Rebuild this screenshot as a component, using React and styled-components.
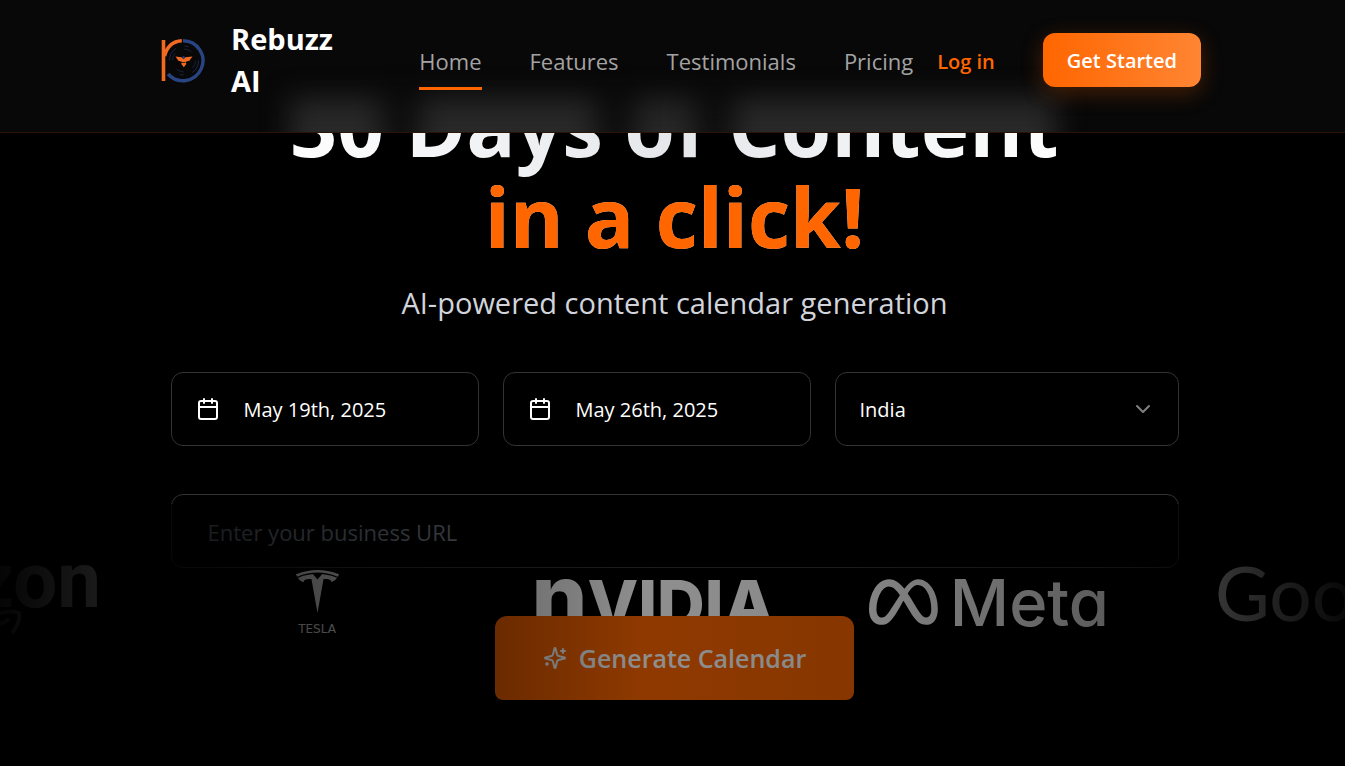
import { useState } from 'react'
import styled, { createGlobalStyle } from 'styled-components'
import { SiMeta, SiTesla } from 'react-icons/si'

const colors = {
  primary: '#ff6600',
  primaryLight: '#ff8533',
  border: '#333333',
  muted: '#a3a3a3',
}

const GlobalStyle = createGlobalStyle`
  * {
    box-sizing: border-box;
  }

  body {
    margin: 0;
    background-color: #000;
    color: #fff;
    font-family: 'Open Sans', 'Noto Sans', sans-serif;
    overflow-x: hidden;
  }

  button, input, select {
    font-family: inherit;
  }
`

const HeaderBar = styled.header`
  position: fixed;
  top: 0;
  left: 0;
  right: 0;
  z-index: 10;
  overflow: hidden;
  background-color: #080808;
  border-bottom: 1px solid rgba(255, 102, 0, 0.15);

  /* soft light of the title behind the bar */
  &::before {
    content: '';
    position: absolute;
    z-index: -1;
    top: 98px;
    left: 50%;
    width: 766px;
    height: 80px;
    transform: translateX(-50%);
    background: linear-gradient(
      90deg,
      #282828 0 12%,
      #0c0c0c 12% 17%,
      #282828 17% 40%,
      #0c0c0c 40% 45%,
      #262626 45% 53%,
      #0c0c0c 53% 58%,
      #282828 58%
    );
    filter: blur(14px);
  }
`

const HeaderInner = styled.div`
  max-width: 1057px;
  margin: 0 auto;
  padding: 18px 0 30px 16px;
  display: flex;
  align-items: center;
`

const Brand = styled.a`
  flex: 1;
  display: flex;
  align-items: center;
  gap: 24px;
  color: white;
  text-decoration: none;
`

const BrandName = styled.span`
  width: 112px;
  font-size: 29px;
  font-weight: 700;
  line-height: 42px;
`

const Nav = styled.nav`
  display: flex;
  gap: 48px;
`

const NavLink = styled.a`
  padding: 12px 0 8px;
  color: ${colors.muted};
  text-decoration: none;
  font-size: 22px;
  line-height: 36px;
  border-bottom: 3px solid ${(props) => (props.$isActive ? colors.primary : 'transparent')};
`

const LoginLink = styled.a`
  padding: 2px 24px 0;
  color: ${colors.primary};
  text-decoration: none;
  font-size: 20px;
  font-weight: 600;
  white-space: nowrap;
`

const StartButton = styled.button`
  height: 54px;
  margin-left: 24px;
  padding: 0 24px;
  border: none;
  border-radius: 12px;
  background: linear-gradient(90deg, ${colors.primary}, ${colors.primaryLight});
  box-shadow: 0 6px 22px rgba(255, 102, 0, 0.25);
  color: white;
  font-size: 20px;
  font-weight: 600;
  white-space: nowrap;
`

const Hero = styled.main`
  padding-top: 80px;
  min-height: 100vh;
`

const Container = styled.div`
  max-width: 1012px;
  margin: 0 auto;
  padding-left: 4px;
`

const Title = styled.h1`
  margin: 0;
  color: transparent;
  background: linear-gradient(90deg, #ffffff 10%, #e5e7eb, #ffffff 90%);
  background-clip: text;
  font-size: 82px;
  font-weight: 700;
  line-height: 91px;
  text-align: center;
`

const TitleAccent = styled.span`
  display: block;
  color: ${colors.primary};
`

const Subtitle = styled.p`
  margin: 20px 0 48px;
  color: #d1d5db;
  font-size: 29px;
  line-height: 42px;
  text-align: center;
`

const Fields = styled.div`
  display: grid;
  grid-template-columns: 308fr 308fr 344fr;
  gap: 24px;
`

const DateButton = styled.button`
  height: 74px;
  padding: 0 24px;
  display: flex;
  align-items: center;
  gap: 24px;
  border: 1px solid ${colors.border};
  border-radius: 12px;
  background-color: transparent;
  color: white;
  font-size: 20px;
`

const SelectBox = styled.div`
  display: grid;
  align-items: center;

  > * {
    grid-area: 1 / 1;
  }

  svg {
    justify-self: end;
    margin-right: 24px;
    pointer-events: none;
  }
`

const CountrySelect = styled.select`
  appearance: none;
  width: 100%;
  height: 74px;
  padding: 0 24px;
  border: 1px solid ${colors.border};
  border-radius: 12px;
  background-color: transparent;
  color: white;
  font-size: 20px;
`

const Stage = styled.section`
  position: relative;
  margin-top: 48px;
  overflow: hidden;
`

const StageForm = styled.form`
  position: relative;
  display: flex;
  flex-direction: column;
  align-items: center;
  gap: 48px;
`

const UrlInput = styled.input`
  width: 100%;
  height: 74px;
  padding: 2px 36px 0;
  border: 1px solid ${colors.border};
  border-radius: 12px;
  background-color: transparent;
  color: white;
  font-size: 22px;

  &::placeholder {
    color: #868e9c;
  }
`

const GenerateButton = styled.button`
  height: 84px;
  padding: 0 48px;
  display: flex;
  align-items: center;
  gap: 12px;
  border: none;
  border-radius: 12px 12px 8px 8px;
  background-color: ${colors.primary};
  color: white;
  font-size: 25px;
  font-weight: 600;
`

// darkens the lower part of the hero, strongest at both edges
const Shade = styled.div`
  position: absolute;
  inset: 10px 0 0;
  pointer-events: none;
  background: linear-gradient(
    90deg,
    rgba(0, 0, 0, 0.98) 0%,
    rgba(0, 0, 0, 0.72) 23%,
    rgba(0, 0, 0, 0.58) 37%,
    rgba(0, 0, 0, 0.44) 48%,
    rgba(0, 0, 0, 0.47) 63%,
    rgba(0, 0, 0, 0.64) 82%,
    rgba(0, 0, 0, 0.8) 91%,
    rgba(0, 0, 0, 0.97) 100%
  );
`

const Marquee = styled.div`
  position: absolute;
  top: 58px;
  left: -139px;
  display: flex;
  gap: 96px;
`

const LogoSlot = styled.div`
  width: 240px;
  height: 96px;
  padding: ${(props) => props.$padding || '0'};
  flex-shrink: 0;
  display: flex;
  flex-direction: ${(props) => (props.$isStacked ? 'column' : 'row')};
  align-items: center;
  justify-content: ${(props) => props.$align || 'center'};
  gap: ${(props) => props.$gap || 0}px;
`

const AmazonMark = styled.div`
  position: relative;
  align-self: flex-start;
  font-family: Roboto, sans-serif;
  font-size: 78px;
  font-weight: 700;
  line-height: 58px;

  svg {
    position: absolute;
    right: 78px;
    top: 56px;
  }
`

const TeslaName = styled.span`
  font-family: 'DejaVu Sans', sans-serif;
  font-size: 12px;
  line-height: 12px;
`

const NvidiaMark = styled.span`
  font-family: Inter, sans-serif;
  font-size: 66px;
  font-weight: 800;
  line-height: 96px;
`

const NvidiaInitial = styled.span`
  font-size: 88px;
`

const MetaName = styled.span`
  font-family: Inter, sans-serif;
  font-size: 65px;
  font-weight: 500;
  font-feature-settings: 'cv11';
`

const GoogleMark = styled.span`
  font-family: Lato, sans-serif;
  font-size: 75px;
  line-height: 80px;
`

function RebuzzLogo() {
  return (
    <svg width="47" height="48" viewBox="0 0 47 48" fill="none" aria-hidden="true">
      <path d="M3.500 4v41" stroke="#f26a21" strokeWidth="3.600" />
      <path d="M4.500 20C7 10.500 13 5.200 21.800 4.700" stroke="#f26a21" strokeWidth="3.600" />
      <path d="M23 4.700A20 20 0 1 1 8 38" stroke="#284482" strokeWidth="3.400" />
      <circle cx="24" cy="24.500" r="14.500" stroke="#1b2a4c" strokeDasharray="14 9 4 18.500" />
      <circle cx="24" cy="24.500" r="11.500" stroke="#16213a" strokeDasharray="8 10" />
      <path
        d="M15.500 20.500l6 .8 2 1.700 2-1.700 7-.8-3.200 4.300-3.500.9.500 2.300-2.500 3.200-2.500-3.200.5-2.300-3.500-.9z"
        fill="#f26a21"
      />
      <circle cx="23.500" cy="21.500" r="1.300" fill="#284482" />
      <path d="M21.500 26.500h4" stroke="#101010" strokeWidth=".8" />
    </svg>
  )
}

function CalendarIcon() {
  return (
    <svg width="24" height="24" viewBox="0 0 24 24" fill="none" stroke="currentColor" strokeWidth="2" strokeLinecap="round" strokeLinejoin="round">
      <path d="M8 2v4M16 2v4M3 10h18" />
      <rect width="18" height="18" x="3" y="4" rx="2" />
    </svg>
  )
}

function SparklesIcon() {
  return (
    <svg width="24" height="24" viewBox="0 0 24 24" fill="none" stroke="currentColor" strokeWidth="2" strokeLinecap="round" strokeLinejoin="round">
      <path d="M9.937 15.500A2 2 0 0 0 8.500 14.063l-6.135-1.582a.5.5 0 0 1 0-.962L8.500 9.936A2 2 0 0 0 9.937 8.500l1.582-6.135a.5.5 0 0 1 .963 0L14.063 8.500A2 2 0 0 0 15.500 9.937l6.135 1.581a.5.5 0 0 1 0 .964L15.500 14.063a2 2 0 0 0-1.437 1.437l-1.582 6.135a.5.5 0 0 1-.963 0z" />
      <path d="M20 3v4M22 5h-4M4 17v2M5 18H3" />
    </svg>
  )
}

function Header() {
  return (
    <HeaderBar>
      <HeaderInner>
        <Brand href="#home">
          <RebuzzLogo />
          <BrandName>Rebuzz AI</BrandName>
        </Brand>
        <Nav>
          <NavLink href="#home" $isActive>
            Home
          </NavLink>
          <NavLink href="#features">Features</NavLink>
          <NavLink href="#testimonials">Testimonials</NavLink>
          <NavLink href="#pricing">Pricing</NavLink>
        </Nav>
        <LoginLink href="#login">Log in</LoginLink>
        <StartButton type="button">Get Started</StartButton>
      </HeaderInner>
    </HeaderBar>
  )
}

function Logos() {
  return (
    <Marquee>
      <LogoSlot $align="flex-end">
        <AmazonMark>
          amazon
          <svg width="40" height="28" viewBox="0 0 40 28" fill="none" stroke="currentColor" strokeWidth="4">
            <path d="M14 6c8-3 18-3 22-1 1 7-2 14-7 20M2 20c9-1 18-4 24-9" />
          </svg>
        </AmazonMark>
      </LogoSlot>
      <LogoSlot $isStacked $gap={10} $padding="4px 0 0">
        <SiTesla size={43} />
        <TeslaName>TESLA</TeslaName>
      </LogoSlot>
      <LogoSlot>
        <NvidiaMark>
          <NvidiaInitial>n</NvidiaInitial>VIDIA
        </NvidiaMark>
      </LogoSlot>
      <LogoSlot $gap={12} $padding="4px 0 0">
        <SiMeta size={74} />
        <MetaName>Meta</MetaName>
      </LogoSlot>
      <LogoSlot $align="flex-start" $padding="0 0 16px 10px">
        <GoogleMark>Google</GoogleMark>
      </LogoSlot>
    </Marquee>
  )
}

function App() {
  const [country, setCountry] = useState('India')
  const [url, setUrl] = useState('')

  return (
    <>
      <GlobalStyle />
      <Header />
      <Hero>
        <Container>
          <Title>
            30 Days of Content
            <TitleAccent>in a click!</TitleAccent>
          </Title>
          <Subtitle>AI-powered content calendar generation</Subtitle>
          <Fields>
            <DateButton type="button">
              <CalendarIcon />
              May 19th, 2025
            </DateButton>
            <DateButton type="button">
              <CalendarIcon />
              May 26th, 2025
            </DateButton>
            <SelectBox>
              <CountrySelect
                aria-label="Country"
                value={country}
                onChange={(e) => setCountry(e.target.value)}
              >
                <option>India</option>
              </CountrySelect>
              <svg width="24" height="24" viewBox="0 0 24 24" fill="none" stroke="#808080" strokeWidth="2" strokeLinecap="round" strokeLinejoin="round">
                <path d="m6 9 6 6 6-6" />
              </svg>
            </SelectBox>
          </Fields>
        </Container>

        <Stage>
          <Logos />
          <Container>
            <StageForm onSubmit={(e) => e.preventDefault()}>
              <UrlInput
                aria-label="Business URL"
                placeholder="Enter your business URL"
                value={url}
                onChange={(e) => setUrl(e.target.value)}
              />
              <GenerateButton type="submit">
                <SparklesIcon />
                Generate Calendar
              </GenerateButton>
            </StageForm>
          </Container>
          <Shade />
        </Stage>
      </Hero>
    </>
  )
}

export default App
